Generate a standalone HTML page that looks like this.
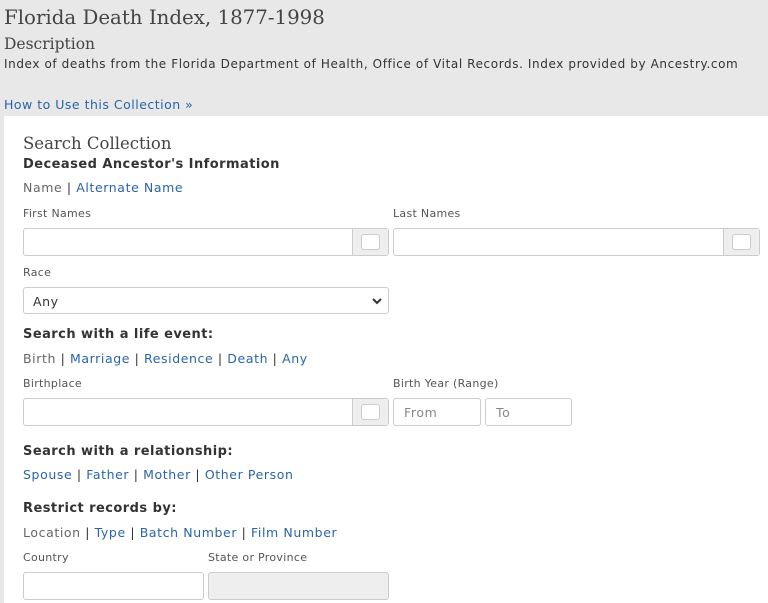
<!DOCTYPE html>
<html><head><meta charset="utf-8"><style>
*{margin:0;padding:0;box-sizing:border-box}
body{width:768px;height:603px;overflow:hidden;background:#e8e8e8;font-family:"DejaVu Sans","Liberation Sans",sans-serif;color:#333;position:relative}
.a{position:absolute;white-space:nowrap}
.serif{font-family:"DejaVu Serif","Liberation Serif",serif;color:#444}
.lnk{color:#2a64a8}
.g{color:#666}
.h{font-weight:bold;font-size:13px;color:#333;letter-spacing:0.45px}
.lbl{font-size:11px;color:#555;letter-spacing:0.3px}
.t{font-size:12.5px;letter-spacing:0.6px}
.panel{position:absolute;left:4px;top:116px;width:764px;height:487px;background:#fff}
.in{position:absolute;border:1px solid #ccc;border-radius:3px;background:#fff}
.cb{position:absolute;top:0;right:0;bottom:0;width:36px;background:#eee;border-left:1px solid #ccc}
.cb i{position:absolute;left:8px;top:5px;width:19px;height:16px;background:#fff;border:1px solid #ccc;border-radius:3px}
</style></head><body>
<div class="a serif" style="left:4px;top:6px;font-size:19.8px">Florida Death Index, 1877-1998</div>
<div class="a serif" style="left:4px;top:35px;font-size:15.5px">Description</div>
<div class="a" style="left:4px;top:57px;font-size:12px;letter-spacing:0.6px">Index of deaths from the Florida Department of Health, Office of Vital Records. Index provided by Ancestry.com</div>
<div class="a lnk" style="left:4px;top:97px;font-size:12.5px;letter-spacing:0.5px">How to Use this Collection »</div>
<div class="panel"></div>
<div class="a serif" style="left:23px;top:134px;font-size:16.5px">Search Collection</div>
<div class="a h" style="left:23px;top:157px">Deceased Ancestor's Information</div>
<div class="a t" style="left:23px;top:180px"><span class="g">Name</span> | <span class="lnk">Alternate Name</span></div>
<div class="a lbl" style="left:23px;top:207px">First Names</div>
<div class="a lbl" style="left:393px;top:207px">Last Names</div>
<div class="in" style="left:23px;top:228px;width:366px;height:28px"><div class="cb"><i></i></div></div>
<div class="in" style="left:393px;top:228px;width:367px;height:28px"><div class="cb"><i></i></div></div>
<div class="a lbl" style="left:23px;top:266px">Race</div>
<div class="in" style="left:23px;top:287px;width:366px;height:27px"><span class="a t" style="left:9px;top:6px">Any</span><svg class="a" style="right:6px;top:9px" width="10" height="8"><path d="M1 2l4 4 4-4" stroke="#333" stroke-width="2" fill="none"/></svg></div>
<div class="a h" style="left:23px;top:327px">Search with a life event:</div>
<div class="a t" style="left:23px;top:351px"><span class="g">Birth</span> | <span class="lnk">Marriage</span> | <span class="lnk">Residence</span> | <span class="lnk">Death</span> | <span class="lnk">Any</span></div>
<div class="a lbl" style="left:23px;top:377px">Birthplace</div>
<div class="a lbl" style="left:393px;top:377px">Birth Year (Range)</div>
<div class="in" style="left:23px;top:398px;width:366px;height:28px"><div class="cb"><i></i></div></div>
<div class="in" style="left:393px;top:398px;width:88px;height:28px"><span class="a t" style="left:10px;top:6px;color:#888">From</span></div>
<div class="in" style="left:485px;top:398px;width:87px;height:28px"><span class="a t" style="left:10px;top:6px;color:#888">To</span></div>
<div class="a h" style="left:23px;top:444px">Search with a relationship:</div>
<div class="a t" style="left:23px;top:467px"><span class="lnk">Spouse</span> | <span class="lnk">Father</span> | <span class="lnk">Mother</span> | <span class="lnk">Other Person</span></div>
<div class="a h" style="left:23px;top:501px">Restrict records by:</div>
<div class="a t" style="left:23px;top:525px"><span class="g">Location</span> | <span class="lnk">Type</span> | <span class="lnk">Batch Number</span> | <span class="lnk">Film Number</span></div>
<div class="a lbl" style="left:23px;top:551px">Country</div>
<div class="a lbl" style="left:208px;top:551px">State or Province</div>
<div class="in" style="left:23px;top:572px;width:181px;height:28px"></div>
<div class="in" style="left:208px;top:572px;width:181px;height:28px;background:#eee"></div>
</body></html>
